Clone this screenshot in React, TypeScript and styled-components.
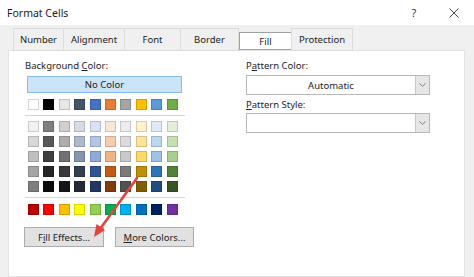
import React from "react";
import styled, { createGlobalStyle } from "styled-components";

const GlobalStyle = createGlobalStyle`
  html, body {
    margin: 0;
    padding: 0;
    background: #ffffff;
  }
  * {
    box-sizing: border-box;
  }
`;

const uiFont = `"Noto Sans", "Open Sans", "DejaVu Sans", sans-serif`;

const Window = styled.div`
  position: relative;
  width: 474px;
  height: 277px;
  overflow: hidden;
  background: #f0f0f0;
  font-family: ${uiFont};
  color: #1a1a1a;
  display: flex;
  flex-direction: column;
`;

const TitleBar = styled.div`
  height: 25px;
  flex: 0 0 25px;
  background: #ffffff;
  display: flex;
  align-items: center;
  padding-left: 7px;
`;

const Title = styled.span`
  font-size: 10.5px;
  flex: 1;
`;

const TitleButton = styled.span`
  width: 40px;
  display: flex;
  align-items: center;
  justify-content: center;
  font-size: 11px;
  color: #333;
`;

const Body = styled.div`
  flex: 1;
  padding: 3px 9px 0 8px;
  display: flex;
  flex-direction: column;
`;

const TabStrip = styled.div`
  display: flex;
  align-items: flex-end;
  height: 23px;
  padding-left: 6px;
  margin-bottom: -1px;
  position: relative;
  z-index: 1;
`;

const Tab = styled.div<{ $w: number; $active?: boolean }>`
  width: ${(p) => p.$w}px;
  height: ${(p) => (p.$active ? 18 : 23)}px;
  margin-bottom: ${(p) => (p.$active ? 1 : 0)}px;
  display: flex;
  align-items: center;
  justify-content: center;
  font-size: 9.5px;
  color: #222;
  background: ${(p) => (p.$active ? "#ffffff" : "#f0f0f0")};
  border: 1px solid ${(p) => (p.$active ? "#a0a0a0" : "#dcdcdc")};
  margin-left: ${(p) => (p.$active ? 0 : -1)}px;
`;

const Panel = styled.div`
  flex: 1;
  background: #ffffff;
  border: 1px solid #e3e3e3;
  display: flex;
  padding: 8px 0 0 16px;
`;

const LeftColumn = styled.div`
  width: 221px;
  display: flex;
  flex-direction: column;
`;

const RightColumn = styled.div`
  width: 184px;
  display: flex;
  flex-direction: column;
`;

const Label = styled.div<{ $top?: number }>`
  font-size: 9.5px;
  height: 14px;
  line-height: 14px;
  margin-top: ${(p) => p.$top ?? 0}px;
  color: #222;
`;

const NoColorButton = styled.div`
  margin: 3px 0 0 2px;
  width: 155px;
  height: 17px;
  background: #cce4f7;
  border: 1px solid #86bde8;
  font-size: 9.5px;
  display: flex;
  align-items: center;
  justify-content: center;
  color: #222;
`;

const SwatchRow = styled.div<{ $top: number }>`
  display: grid;
  grid-template-columns: repeat(10, 11px);
  column-gap: 4.4px;
  margin: ${(p) => p.$top}px 0 0 3px;
`;

const Swatch = styled.div<{ $c: string }>`
  width: 11px;
  height: 11px;
  background: ${(p) => p.$c};
  border: 1px solid rgba(0, 0, 0, 0.16);
`;

const Separator = styled.div<{ $top: number }>`
  width: 160px;
  height: 1px;
  background: #d6d6d6;
  margin-top: ${(p) => p.$top}px;
`;

const ButtonRow = styled.div`
  display: flex;
  gap: 11px;
  margin-top: 12px;
  margin-left: -1px;
`;

const PushButton = styled.div<{ $w: number }>`
  width: ${(p) => p.$w}px;
  height: 20px;
  background: #e1e1e1;
  border: 1px solid #adadad;
  font-size: 9.5px;
  display: flex;
  align-items: center;
  justify-content: center;
  color: #222;
`;

const Select = styled.div<{ $top: number }>`
  margin-top: ${(p) => p.$top}px;
  height: 20px;
  width: 184px;
  border: 1px solid #b8b8b8;
  display: flex;
  background: #ffffff;
`;

const SelectValue = styled.div`
  flex: 1;
  font-size: 9.5px;
  display: flex;
  align-items: center;
  justify-content: center;
  color: #222;
`;

const SelectArrow = styled.div`
  width: 14px;
  background: #e6e6e6;
  border-left: 1px solid #c8c8c8;
  display: flex;
  align-items: center;
  justify-content: center;
`;

const ArrowOverlay = styled.svg`
  position: absolute;
  left: 0;
  top: 0;
  pointer-events: none;
`;

const themeRow = ["#FFFFFF", "#000000", "#E7E6E6", "#44546A", "#4472C4", "#ED7D31", "#A5A5A5", "#FFC000", "#5B9BD5", "#70AD47"];
const tintRows = [
  ["#F2F2F2", "#7F7F7F", "#D0CECE", "#D6DCE4", "#D9E2F3", "#FBE5D5", "#EDEDED", "#FFF2CC", "#DEEBF6", "#E2EFD9"],
  ["#D8D8D8", "#595959", "#AEABAB", "#ADB9CA", "#B4C6E7", "#F7CBAC", "#DBDBDB", "#FEE599", "#BDD7EE", "#C5E0B3"],
  ["#BFBFBF", "#3F3F3F", "#757070", "#8496B0", "#8EAADB", "#F4B183", "#C9C9C9", "#FFD965", "#9DC3E6", "#A8D08D"],
  ["#A5A5A5", "#262626", "#3A3838", "#323F4F", "#2F5496", "#C55A11", "#7B7B7B", "#BF9000", "#2E75B5", "#538135"],
  ["#7F7F7F", "#0C0C0C", "#171616", "#222A35", "#1F3864", "#833C0B", "#525252", "#7F6000", "#1E4E79", "#375623"],
];
const standardRow = ["#C00000", "#FF0000", "#FFC000", "#FFFF00", "#92D050", "#00B050", "#00B0F0", "#0070C0", "#002060", "#7030A0"];

const tabs = [
  { label: "Number", w: 51 },
  { label: "Alignment", w: 62 },
  { label: "Font", w: 57 },
  { label: "Border", w: 59 },
  { label: "Fill", w: 53, active: true },
  { label: "Protection", w: 62 },
];

const Chevron = () => (
  <svg width="7" height="4" viewBox="0 0 7 4">
    <path d="M0.5 0.5 L3.5 3.2 L6.5 0.5" fill="none" stroke="#707070" strokeWidth="0.9" />
  </svg>
);

const CloseIcon = () => (
  <svg width="10" height="10" viewBox="0 0 10 10">
    <path d="M0.5 0.5 L9.5 9.5 M9.5 0.5 L0.5 9.5" stroke="#333" strokeWidth="0.9" fill="none" />
  </svg>
);

const Swatches = ({ colors, top }: { colors: string[]; top: number }) => (
  <SwatchRow $top={top}>
    {colors.map((c, i) => (
      <Swatch key={i} $c={c} />
    ))}
  </SwatchRow>
);

const App = () => {
  return (
    <>
      <GlobalStyle />
      <Window>
        <TitleBar>
          <Title>Format Cells</Title>
          <TitleButton>?</TitleButton>
          <TitleButton>
            <CloseIcon />
          </TitleButton>
        </TitleBar>
        <Body>
          <TabStrip>
            {tabs.map((t) => (
              <Tab key={t.label} $w={t.w} $active={t.active}>
                {t.label}
              </Tab>
            ))}
          </TabStrip>
          <Panel>
            <LeftColumn>
              <Label>
                Background <u>C</u>olor:
              </Label>
              <NoColorButton>No Color</NoColorButton>
              <Swatches colors={themeRow} top={6} />
              <Separator $top={5} />
              {tintRows.map((row, i) => (
                <Swatches key={i} colors={row} top={i === 0 ? 5 : 4} />
              ))}
              <Separator $top={5} />
              <Swatches colors={standardRow} top={6} />
              <ButtonRow>
                <PushButton $w={80}>
                  <span>
                    F<u>i</u>ll Effects...
                  </span>
                </PushButton>
                <PushButton $w={79}>
                  <span>
                    <u>M</u>ore Colors...
                  </span>
                </PushButton>
              </ButtonRow>
            </LeftColumn>
            <RightColumn>
              <Label>
                P<u>a</u>ttern Color:
              </Label>
              <Select $top={2}>
                <SelectValue>Automatic</SelectValue>
                <SelectArrow>
                  <Chevron />
                </SelectArrow>
              </Select>
              <Label $top={3}>
                <u>P</u>attern Style:
              </Label>
              <Select $top={1}>
                <SelectValue />
                <SelectArrow>
                  <Chevron />
                </SelectArrow>
              </Select>
            </RightColumn>
          </Panel>
        </Body>
        <ArrowOverlay width="474" height="277" viewBox="0 0 474 277">
          <line x1="137" y1="178" x2="100" y2="229" stroke="#e8413b" strokeWidth="2.6" strokeLinecap="round" />
          <polygon points="94,237 96.5,224 105,230" fill="#e8413b" />
        </ArrowOverlay>
      </Window>
    </>
  );
};

export default App;
